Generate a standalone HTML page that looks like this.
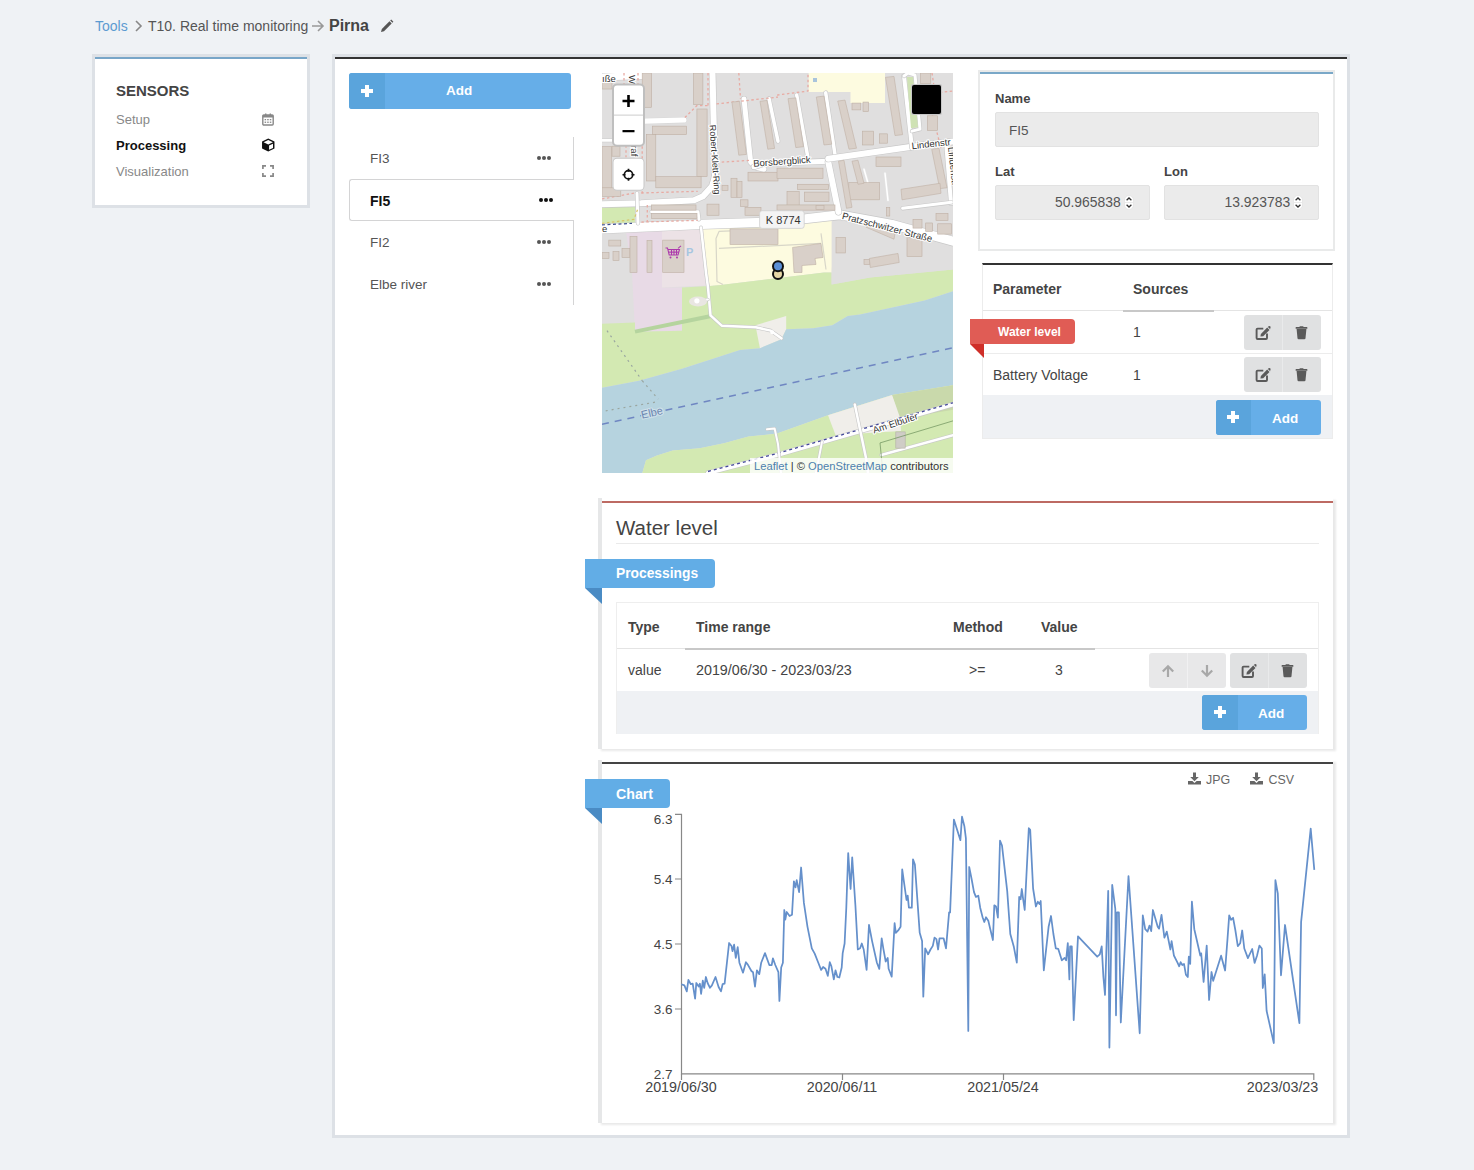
<!DOCTYPE html>
<html><head><meta charset="utf-8">
<style>
*{box-sizing:border-box;margin:0;padding:0}
html,body{width:1474px;height:1170px;overflow:hidden;background:#eff2f5;font-family:"Liberation Sans",sans-serif;color:#444}
body{position:relative}
.a{position:absolute;white-space:nowrap;line-height:1}
.box{position:absolute;background:#fff;border:3px solid #dde1e6}
.btn{position:absolute;background:#66aee8;color:#fff;font-weight:bold;border-radius:3px;overflow:hidden}
.btn .ic{position:absolute;left:0;top:0;bottom:0;background:#5aa4dc}
.plus{position:absolute;width:12px;height:12px}
.plus:before,.plus:after{content:"";position:absolute;background:#fff}
.plus:before{left:4px;top:0;width:4px;height:12px}
.plus:after{left:0;top:4px;width:12px;height:4px}
.item{position:absolute;left:349px;width:225px;height:42px;font-size:13.5px;color:#555}
.item .tx{position:absolute;left:21px;top:15px;line-height:1}
.dots{position:absolute;left:188px;top:19px;width:14px;height:4px}
.dots i{position:absolute;top:0;width:4px;height:4px;border-radius:2px;background:#555}
.gbtn{position:absolute;background:#e0e1e2}
.lbl{font-size:13px;font-weight:bold;color:#444}
.inp{position:absolute;background:#ebebeb;border:1px solid #e2e2e2;border-radius:2px}
.th{font-size:14px;font-weight:bold;color:#444}
.td{font-size:14px;color:#444}
.ribbon{position:absolute;color:#fff;font-weight:bold;border-radius:0 4px 4px 0}
</style></head>
<body>
<!-- breadcrumb -->
<div class="a" style="left:95px;top:19px;font-size:14px;color:#5c9bd1">Tools</div>
<svg class="a" style="left:133px;top:19px" width="10" height="14" viewBox="0 0 10 14"><path d="M3 2 L8 7 L3 12" fill="none" stroke="#888" stroke-width="1.6"/></svg>
<div class="a" style="left:148px;top:19px;font-size:14px;color:#555">T10. Real time monitoring</div>
<svg class="a" style="left:311px;top:19px" width="14" height="14" viewBox="0 0 14 14"><path d="M1 7 H12 M7 2 L12 7 L7 12" fill="none" stroke="#999" stroke-width="1.6"/></svg>
<div class="a" style="left:329px;top:17.5px;font-size:16px;font-weight:bold;color:#444">Pirna</div>
<svg class="a" style="left:379px;top:19px" width="15" height="15" viewBox="0 0 15 15"><path d="M2 13 L2.8 10 L10.5 2.3 L12.7 4.5 L5 12.2 Z" fill="#555"/><path d="M11.2 1.6 L12.2 0.6 L14.4 2.8 L13.4 3.8Z" fill="#555"/></svg>

<!-- sidebar -->
<div class="box" style="left:92px;top:54px;width:218px;height:154px">
  <div style="position:absolute;left:0;right:0;top:0;height:2px;background:#78a6c8"></div>
</div>
<div class="a" style="left:116px;top:82.5px;font-size:15px;font-weight:bold;color:#444">SENSORS</div>
<div class="a" style="left:116px;top:113px;font-size:13px;color:#888">Setup</div>
<div class="a" style="left:116px;top:139px;font-size:13px;font-weight:bold;color:#111">Processing</div>
<div class="a" style="left:116px;top:165px;font-size:13px;color:#888">Visualization</div>
<svg class="a" style="left:262px;top:112.7px" width="12" height="13" viewBox="0 0 12 13"><rect x="0.8" y="2" width="10.4" height="10" rx="1" fill="none" stroke="#888" stroke-width="1.4"/><rect x="0.8" y="2" width="10.4" height="2.5" fill="#888"/><rect x="3" y="0.5" width="1.4" height="2.5" fill="#888"/><rect x="7.6" y="0.5" width="1.4" height="2.5" fill="#888"/><g fill="#888"><rect x="2.6" y="6" width="1.5" height="1.3"/><rect x="5.2" y="6" width="1.5" height="1.3"/><rect x="7.8" y="6" width="1.5" height="1.3"/><rect x="2.6" y="8.6" width="1.5" height="1.3"/><rect x="5.2" y="8.6" width="1.5" height="1.3"/><rect x="7.8" y="8.6" width="1.5" height="1.3"/></g></svg>
<svg class="a" style="left:261px;top:138px" width="14.5" height="14" viewBox="0 0 14 14" preserveAspectRatio="none"><path d="M7 0.5 L13 3.5 V10.5 L7 13.5 L1 10.5 V3.5 Z" fill="#111"/><path d="M2.5 4.2 L7 6.4 L11.5 4.2 L7 2 Z" fill="#fff"/><path d="M7.8 7.6 L11.6 5.7 V9.9 L7.8 11.8Z" fill="#fff"/></svg>
<svg class="a" style="left:262px;top:165px" width="12" height="12" viewBox="0 0 12 12"><path d="M0.9 4 V0.9 H4 M8 0.9 H11.1 V4 M11.1 8 V11.1 H8 M4 11.1 H0.9 V8" fill="none" stroke="#888" stroke-width="1.7"/></svg>

<!-- main container -->
<div class="box" style="left:332px;top:54px;width:1018px;height:1084px">
  <div style="position:absolute;left:0;right:0;top:0;height:2px;background:#333"></div>
</div>

<!-- list add button -->
<div class="btn" style="left:349px;top:73px;width:222px;height:36px">
  <div class="ic" style="width:36px"><div class="plus" style="left:12px;top:12px"></div></div>
  <div class="a" style="left:97px;top:11px;font-size:13.5px">Add</div>
</div>

<!-- list -->
<div style="position:absolute;left:573px;top:137px;width:1px;height:42px;background:#d4d4d5"></div>
<div style="position:absolute;left:573px;top:221px;width:1px;height:84px;background:#d4d4d5"></div>
<div class="item" style="top:137px"><div class="tx">FI3</div><div class="dots"><i style="left:0"></i><i style="left:5px"></i><i style="left:10px"></i></div></div>
<div class="item" style="top:179px;border:1px solid #d4d4d5;border-right:none;border-radius:3px 0 0 3px;background:#fff"><div class="tx" style="left:20px;top:14px;font-weight:bold;color:#111;font-size:14px">FI5</div><div class="dots" style="left:189px;top:18px"><i style="left:0;background:#111"></i><i style="left:5px;background:#111"></i><i style="left:10px;background:#111"></i></div></div>
<div class="item" style="top:221px"><div class="tx">FI2</div><div class="dots"><i style="left:0"></i><i style="left:5px"></i><i style="left:10px"></i></div></div>
<div class="item" style="top:263px"><div class="tx">Elbe river</div><div class="dots"><i style="left:0"></i><i style="left:5px"></i><i style="left:10px"></i></div></div>

<!-- MAP -->
<div id="map" style="position:absolute;left:602px;top:73px;width:351px;height:400px;background:#e0dfdf;overflow:hidden"><svg width="351" height="400" viewBox="0 0 351 399" preserveAspectRatio="none" style="position:absolute;left:0;top:0"><rect x="0" y="0" width="351" height="399" fill="#e0dfdf"/><polygon points="100,152 233,146 229.6,199 222,199 118.5,211.5 108,212.5 104,199" fill="#fdfbe0"/><polygon points="206.6,0 283,0 283,30 248.5,30 248.5,19 206.6,19" fill="#fdfbe0"/><rect x="211" y="5" width="4" height="4" fill="#a9c4dc"/><polygon points="24,158 60,157 60,214 80,214 80,257 33,258 30,199" fill="#e8dae6"/><polygon points="60,157 101,154 104,199 106,212 60,214" fill="#ece2e6"/><polygon points="0,250 33,249 33,258 80,257 80,214 108,212.5 118.5,211.5 222,199 229.6,199 229.6,211 268,204 351,196 351,217.8 322.6,227 258,241 245.7,242.4 230.3,251.6 211,254.7 184.2,255.5 179.5,265.5 158,274.5 138,276.2 80,295 37,307 0,314" fill="#d3e9b2"/><rect x="0" y="132" width="33" height="18" fill="#d3e9b2"/><polygon points="153.4,251.6 184.2,242.4 184.2,255.5 179.5,265.5 158,274.7" fill="#f0eeea"/><polyline points="33,258 108,242.6" fill="none" stroke="#b5d49e" stroke-width="4" stroke-linecap="butt" stroke-linejoin="round"/><polygon points="229.6,146 351,175 351,196 268,204 229.6,211" fill="#e0dfdf"/><polygon points="0,314 37,307 80,295 138,276.2 158,274.5 179.5,265.5 184.2,255.5 211,254.7 230.3,251.6 245.7,242.4 258,241 322.6,227 351,217.8 351,311.5 290.2,321.2 226,341.3 175,359.7 146.5,362.6 122,369.3 97.7,374.2 70.8,376.6 55,381.5 44,386.4 40.3,399 0,399" fill="#b6d3df"/><polygon points="40.3,399 44,386.4 55,381.5 70.8,376.6 97.7,374.2 122,369.3 146.5,362.6 175,359.7 226,341.3 290.2,321.2 351,311.5 351,399" fill="#d3e9b2"/><polygon points="226,341.3 290.2,321.2 298.4,341.3 299,357 233.5,361" fill="#f0eeea"/><polygon points="290.2,321.2 351,311.5 351,336 298.4,345" fill="#c9d9ab"/><polyline points="0,350.3 351,274" fill="none" stroke="#6f86c2" stroke-width="1.5" stroke-linecap="butt" stroke-linejoin="round" stroke-dasharray="7 6"/><polyline points="40.3,307 56.2,325.3" fill="none" stroke="#9aa6a0" stroke-width="1.2" stroke-linecap="butt" stroke-linejoin="round" stroke-dasharray="2 4"/><polyline points="3.7,337 56.2,327.8" fill="none" stroke="#9aa6a0" stroke-width="1.2" stroke-linecap="butt" stroke-linejoin="round" stroke-dasharray="2 4"/><polyline points="5,257 40.3,307" fill="none" stroke="#9aa6a0" stroke-width="1.2" stroke-linecap="butt" stroke-linejoin="round" stroke-dasharray="2 4"/><polyline points="106,399 175,381 351,330.6" fill="none" stroke="#c8c8c8" stroke-width="5.2" stroke-linecap="round" stroke-linejoin="round"/><polyline points="106,399 175,381 351,330.6" fill="none" stroke="#ffffff" stroke-width="4" stroke-linecap="round" stroke-linejoin="round"/><polyline points="106,397.5 175,379.5 351,329" fill="none" stroke="#454a9a" stroke-width="1.3" stroke-linecap="butt" stroke-linejoin="round" stroke-dasharray="3 3"/><polyline points="252.8,330.6 263.9,383.6 266,399" fill="none" stroke="#c8c8c8" stroke-width="3.7" stroke-linecap="round" stroke-linejoin="round"/><polyline points="252.8,330.6 263.9,383.6 266,399" fill="none" stroke="#ffffff" stroke-width="2.5" stroke-linecap="round" stroke-linejoin="round"/><polyline points="279.3,381 351,361.4" fill="none" stroke="#c8c8c8" stroke-width="3.7" stroke-linecap="round" stroke-linejoin="round"/><polyline points="279.3,381 351,361.4" fill="none" stroke="#ffffff" stroke-width="2.5" stroke-linecap="round" stroke-linejoin="round"/><polyline points="220,368 214,399" fill="none" stroke="#c8c8c8" stroke-width="3.2" stroke-linecap="round" stroke-linejoin="round"/><polyline points="220,368 214,399" fill="none" stroke="#ffffff" stroke-width="2" stroke-linecap="round" stroke-linejoin="round"/><rect x="293.8" y="358" width="9.399999999999977" height="16.19999999999999" fill="#cfcdc6" stroke="#b3b0a6" stroke-width="0.6"/><polyline points="278,369 351,347" fill="none" stroke="#6c8f5a" stroke-width="0.7" stroke-linecap="butt" stroke-linejoin="round"/><polyline points="278,369 281,399" fill="none" stroke="#6c8f5a" stroke-width="0.7" stroke-linecap="butt" stroke-linejoin="round"/><polyline points="165,355.4 172.6,354.6 176,370 179,399" fill="none" stroke="#c8c8c8" stroke-width="3.2" stroke-linecap="round" stroke-linejoin="round"/><polyline points="165,355.4 172.6,354.6 176,370 179,399" fill="none" stroke="#ffffff" stroke-width="2" stroke-linecap="round" stroke-linejoin="round"/><polyline points="0,4 42,2.5" fill="none" stroke="#c8c8c8" stroke-width="8.2" stroke-linecap="round" stroke-linejoin="round"/><polyline points="0,4 42,2.5" fill="none" stroke="#ffffff" stroke-width="7" stroke-linecap="round" stroke-linejoin="round"/><polyline points="0,155.5 100,151 176,148.5 238,141.5 290,151 351,167.8" fill="none" stroke="#c8c8c8" stroke-width="10.2" stroke-linecap="round" stroke-linejoin="round"/><polyline points="0,155.5 100,151 176,148.5 238,141.5 290,151 351,167.8" fill="none" stroke="#ffffff" stroke-width="9" stroke-linecap="round" stroke-linejoin="round"/><polyline points="110.5,0 113,103 110,113 101,123 92,127 39,130 0,131" fill="none" stroke="#c8c8c8" stroke-width="7.2" stroke-linecap="round" stroke-linejoin="round"/><polyline points="110.5,0 113,103 110,113 101,123 92,127 39,130 0,131" fill="none" stroke="#ffffff" stroke-width="6" stroke-linecap="round" stroke-linejoin="round"/><polyline points="35,120 36,150" fill="none" stroke="#c8c8c8" stroke-width="4.2" stroke-linecap="round" stroke-linejoin="round"/><polyline points="35,120 36,150" fill="none" stroke="#ffffff" stroke-width="3" stroke-linecap="round" stroke-linejoin="round"/><polyline points="99,154 104,199 106,214 108.5,241.7 119.7,252 153.8,253.7 168.8,257 179.5,264.7" fill="none" stroke="#c8c8c8" stroke-width="3.7" stroke-linecap="round" stroke-linejoin="round"/><polyline points="99,154 104,199 106,214 108.5,241.7 119.7,252 153.8,253.7 168.8,257 179.5,264.7" fill="none" stroke="#ffffff" stroke-width="2.5" stroke-linecap="round" stroke-linejoin="round"/><circle cx="170.3" cy="258.5" r="2" fill="#fff"/><polyline points="94.9,227 106,226" fill="none" stroke="#c8c8c8" stroke-width="3.2" stroke-linecap="round" stroke-linejoin="round"/><polyline points="94.9,227 106,226" fill="none" stroke="#ffffff" stroke-width="2" stroke-linecap="round" stroke-linejoin="round"/><ellipse cx="96" cy="228" rx="9" ry="5" fill="#e9e6e2"/><circle cx="94.9" cy="227.2" r="2.6" fill="#fff"/><polyline points="142,26 148.7,89 154,94 162,96" fill="none" stroke="#c8c8c8" stroke-width="6.2" stroke-linecap="round" stroke-linejoin="round"/><polyline points="142,26 148.7,89 154,94 162,96" fill="none" stroke="#ffffff" stroke-width="5" stroke-linecap="round" stroke-linejoin="round"/><polyline points="167,25.6 176,68" fill="none" stroke="#c8c8c8" stroke-width="4.7" stroke-linecap="round" stroke-linejoin="round"/><polyline points="167,25.6 176,68" fill="none" stroke="#ffffff" stroke-width="3.5" stroke-linecap="round" stroke-linejoin="round"/><polyline points="194.7,22 205.8,83.8" fill="none" stroke="#c8c8c8" stroke-width="4.7" stroke-linecap="round" stroke-linejoin="round"/><polyline points="194.7,22 205.8,83.8" fill="none" stroke="#ffffff" stroke-width="3.5" stroke-linecap="round" stroke-linejoin="round"/><polyline points="223.7,19.7 233.1,82" fill="none" stroke="#c8c8c8" stroke-width="4.7" stroke-linecap="round" stroke-linejoin="round"/><polyline points="223.7,19.7 233.1,82" fill="none" stroke="#ffffff" stroke-width="3.5" stroke-linecap="round" stroke-linejoin="round"/><polyline points="152,93.5 162,90.5 226,88" fill="none" stroke="#c8c8c8" stroke-width="6.2" stroke-linecap="round" stroke-linejoin="round"/><polyline points="152,93.5 162,90.5 226,88" fill="none" stroke="#ffffff" stroke-width="5" stroke-linecap="round" stroke-linejoin="round"/><polyline points="226.3,88.9 236.5,138.5" fill="none" stroke="#c8c8c8" stroke-width="7.2" stroke-linecap="round" stroke-linejoin="round"/><polyline points="226.3,88.9 236.5,138.5" fill="none" stroke="#ffffff" stroke-width="6" stroke-linecap="round" stroke-linejoin="round"/><polyline points="226.3,85.5 310,73.5 351,68.4" fill="none" stroke="#c8c8c8" stroke-width="7.2" stroke-linecap="round" stroke-linejoin="round"/><polyline points="226.3,85.5 310,73.5 351,68.4" fill="none" stroke="#ffffff" stroke-width="6" stroke-linecap="round" stroke-linejoin="round"/><polyline points="302,3 310,75" fill="none" stroke="#c8c8c8" stroke-width="5.2" stroke-linecap="round" stroke-linejoin="round"/><polyline points="302,3 310,75" fill="none" stroke="#ffffff" stroke-width="4" stroke-linecap="round" stroke-linejoin="round"/><polyline points="302,3 306,0 313,2 318,56 310,58" fill="none" stroke="#c8c8c8" stroke-width="4.2" stroke-linecap="round" stroke-linejoin="round"/><polyline points="302,3 306,0 313,2 318,56 310,58" fill="none" stroke="#ffffff" stroke-width="3" stroke-linecap="round" stroke-linejoin="round"/><polygon points="305,4 311,4 316,54 309,55" fill="#cfe2b4"/><polyline points="344,68 349,130" fill="none" stroke="#c8c8c8" stroke-width="5.2" stroke-linecap="round" stroke-linejoin="round"/><polyline points="344,68 349,130" fill="none" stroke="#ffffff" stroke-width="4" stroke-linecap="round" stroke-linejoin="round"/><polyline points="300.6,135 349.4,129" fill="none" stroke="#c8c8c8" stroke-width="4.2" stroke-linecap="round" stroke-linejoin="round"/><polyline points="300.6,135 349.4,129" fill="none" stroke="#ffffff" stroke-width="3" stroke-linecap="round" stroke-linejoin="round"/><polyline points="42.7,48 82,47" fill="none" stroke="#d8d8d8" stroke-width="6.2" stroke-linecap="round" stroke-linejoin="round"/><polyline points="42.7,48 82,47" fill="none" stroke="#ffffff" stroke-width="5" stroke-linecap="round" stroke-linejoin="round"/><polyline points="0,67 12,67" fill="none" stroke="#c8c8c8" stroke-width="4.2" stroke-linecap="round" stroke-linejoin="round"/><polyline points="0,67 12,67" fill="none" stroke="#ffffff" stroke-width="3" stroke-linecap="round" stroke-linejoin="round"/><polyline points="49.6,138.5 96,138.5 97,146" fill="none" stroke="#c8c8c8" stroke-width="4.2" stroke-linecap="round" stroke-linejoin="round"/><polyline points="49.6,138.5 96,138.5 97,146" fill="none" stroke="#ffffff" stroke-width="3" stroke-linecap="round" stroke-linejoin="round"/><polyline points="262,96 270,124" fill="none" stroke="#e5e5e5" stroke-width="2.7" stroke-linecap="round" stroke-linejoin="round"/><polyline points="262,96 270,124" fill="none" stroke="#ffffff" stroke-width="1.5" stroke-linecap="round" stroke-linejoin="round"/><polyline points="283,100 286,127" fill="none" stroke="#e5e5e5" stroke-width="2.7" stroke-linecap="round" stroke-linejoin="round"/><polyline points="283,100 286,127" fill="none" stroke="#ffffff" stroke-width="1.5" stroke-linecap="round" stroke-linejoin="round"/><polyline points="141,157 117,158 114,165 115,208 121,211" fill="none" stroke="#d8d6c8" stroke-width="1.2" stroke-linecap="butt" stroke-linejoin="round"/><polyline points="117,175 219,170" fill="none" stroke="#d8d6c8" stroke-width="1.2" stroke-linecap="butt" stroke-linejoin="round"/><polyline points="219,160 224,196" fill="none" stroke="#d8d6c8" stroke-width="1.2" stroke-linecap="butt" stroke-linejoin="round"/><polyline points="106,0 106,32.5" fill="none" stroke="#e8aaa2" stroke-width="1.3" stroke-linecap="butt" stroke-linejoin="round" stroke-dasharray="2.5 2.5"/><polyline points="82.9,44.4 94.9,32.5 106,32.5" fill="none" stroke="#e8aaa2" stroke-width="1.3" stroke-linecap="butt" stroke-linejoin="round" stroke-dasharray="2.5 2.5"/><polyline points="114.5,30.8 176,24" fill="none" stroke="#e8aaa2" stroke-width="1.3" stroke-linecap="butt" stroke-linejoin="round" stroke-dasharray="2.5 2.5"/><polyline points="136.8,0 138.5,25.6" fill="none" stroke="#e8aaa2" stroke-width="1.3" stroke-linecap="butt" stroke-linejoin="round" stroke-dasharray="2.5 2.5"/><polyline points="119.7,88.9 147,87.2" fill="none" stroke="#e8aaa2" stroke-width="1.3" stroke-linecap="butt" stroke-linejoin="round" stroke-dasharray="2.5 2.5"/><polyline points="39.3,119.7 95.7,118" fill="none" stroke="#e8aaa2" stroke-width="1.3" stroke-linecap="butt" stroke-linejoin="round" stroke-dasharray="2.5 2.5"/><polyline points="22,0 22,12" fill="none" stroke="#e8aaa2" stroke-width="1.3" stroke-linecap="butt" stroke-linejoin="round" stroke-dasharray="2.5 2.5"/><polyline points="36,0 36,12" fill="none" stroke="#e8aaa2" stroke-width="1.3" stroke-linecap="butt" stroke-linejoin="round" stroke-dasharray="2.5 2.5"/><polyline points="40.2,68 40.2,120" fill="none" stroke="#e8aaa2" stroke-width="1.3" stroke-linecap="butt" stroke-linejoin="round" stroke-dasharray="2.5 2.5"/><polyline points="24,72 24,84" fill="none" stroke="#e8aaa2" stroke-width="1.3" stroke-linecap="butt" stroke-linejoin="round" stroke-dasharray="2.5 2.5"/><polyline points="0,125.6 32.5,119.7" fill="none" stroke="#e8aaa2" stroke-width="1.3" stroke-linecap="butt" stroke-linejoin="round" stroke-dasharray="2.5 2.5"/><polyline points="45.3,131.6 45.3,148.7" fill="none" stroke="#e8aaa2" stroke-width="1.3" stroke-linecap="butt" stroke-linejoin="round" stroke-dasharray="2.5 2.5"/><polyline points="39.3,148.7 95.7,147" fill="none" stroke="#e8aaa2" stroke-width="1.3" stroke-linecap="butt" stroke-linejoin="round" stroke-dasharray="2.5 2.5"/><polyline points="175,22 206,18 206,0" fill="none" stroke="#e8aaa2" stroke-width="1.3" stroke-linecap="butt" stroke-linejoin="round" stroke-dasharray="2.5 2.5"/><polyline points="330,0 333,20 351,18" fill="none" stroke="#e8aaa2" stroke-width="1.3" stroke-linecap="butt" stroke-linejoin="round" stroke-dasharray="2.5 2.5"/><polyline points="330,40 339,75" fill="none" stroke="#e8aaa2" stroke-width="1.3" stroke-linecap="butt" stroke-linejoin="round" stroke-dasharray="2.5 2.5"/><polyline points="0,150 32,146 36,135" fill="none" stroke="#d9c36a" stroke-width="1.2" stroke-linecap="butt" stroke-linejoin="round" stroke-dasharray="2.5 2.5"/><polyline points="0,151.5 30,150" fill="none" stroke="#3d4f8f" stroke-width="1.2" stroke-linecap="butt" stroke-linejoin="round" stroke-dasharray="3 2.5"/><rect x="40.2" y="0" width="9.399999999999999" height="34.2" fill="#d9d0c9" stroke="#bfb0a4" stroke-width="0.6"/><rect x="91.5" y="0" width="9.400000000000006" height="31.6" fill="#d9d0c9" stroke="#bfb0a4" stroke-width="0.6"/><rect x="94.9" y="35.9" width="10.199999999999989" height="67.5" fill="#d9d0c9" stroke="#bfb0a4" stroke-width="0.6"/><rect x="50.4" y="53" width="34.199999999999996" height="8.5" fill="#d9d0c9" stroke="#bfb0a4" stroke-width="0.6"/><rect x="44.4" y="61.5" width="9.399999999999999" height="46.2" fill="#d9d0c9" stroke="#bfb0a4" stroke-width="0.6"/><rect x="53.8" y="103.4" width="45.3" height="11.099999999999994" fill="#d9d0c9" stroke="#bfb0a4" stroke-width="0.6"/><rect x="105" y="130.8" width="12" height="11.099999999999994" fill="#d9d0c9" stroke="#bfb0a4" stroke-width="0.6"/><rect x="49.6" y="131.6" width="44.4" height="5.200000000000017" fill="#d9d0c9" stroke="#bfb0a4" stroke-width="0.6"/><rect x="49.6" y="140.3" width="45.4" height="5.0" fill="#d9d0c9" stroke="#bfb0a4" stroke-width="0.6"/><rect x="0" y="8.5" width="10" height="7.5" fill="#d9d0c9" stroke="#bfb0a4" stroke-width="0.6"/><rect x="0" y="73.5" width="9.4" height="46.2" fill="#d9d0c9" stroke="#bfb0a4" stroke-width="0.6"/><rect x="0" y="114.5" width="18.8" height="8.5" fill="#d9d0c9" stroke="#bfb0a4" stroke-width="0.6"/><rect x="10" y="73" width="8" height="10" fill="#d9d0c9" stroke="#bfb0a4" stroke-width="0.6"/><rect x="129" y="105" width="6" height="19" fill="#d9d0c9" stroke="#bfb0a4" stroke-width="0.6"/><rect x="135" y="108" width="5" height="16" fill="#d9d0c9" stroke="#bfb0a4" stroke-width="0.6"/><rect x="138.5" y="126.5" width="7.5" height="6.5" fill="#d9d0c9" stroke="#bfb0a4" stroke-width="0.6"/><rect x="143" y="134" width="16" height="7.900000000000006" fill="#d9d0c9" stroke="#bfb0a4" stroke-width="0.6"/><rect x="120" y="112" width="6" height="5" fill="#d9d0c9" stroke="#bfb0a4" stroke-width="0.6"/><rect x="146" y="99" width="30" height="8.700000000000003" fill="#d9d0c9" stroke="#bfb0a4" stroke-width="0.6"/><rect x="128" y="155.5" width="48" height="15.5" fill="#d9d0c9" stroke="#bfb0a4" stroke-width="0.6"/><rect x="6.8" y="166.7" width="12.0" height="5.900000000000006" fill="#d9d0c9" stroke="#bfb0a4" stroke-width="0.6"/><rect x="0" y="179" width="7" height="6" fill="#d9d0c9" stroke="#bfb0a4" stroke-width="0.6"/><rect x="11" y="178" width="6" height="9" fill="#d9d0c9" stroke="#bfb0a4" stroke-width="0.6"/><rect x="20" y="175" width="8" height="9" fill="#d9d0c9" stroke="#bfb0a4" stroke-width="0.6"/><rect x="28" y="163" width="7" height="36" fill="#d9d0c9" stroke="#bfb0a4" stroke-width="0.6"/><rect x="45" y="167" width="5" height="32" fill="#d9d0c9" stroke="#bfb0a4" stroke-width="0.6"/><rect x="60.7" y="166.7" width="21.299999999999997" height="32.30000000000001" fill="#d9d0c9" stroke="#bfb0a4" stroke-width="0.6"/><rect x="250" y="30" width="8.800000000000011" height="6.799999999999997" fill="#d9d0c9" stroke="#bfb0a4" stroke-width="0.6"/><rect x="261" y="29" width="5.5" height="9.5" fill="#d9d0c9" stroke="#bfb0a4" stroke-width="0.6"/><rect x="260.5" y="58" width="11.100000000000023" height="13.799999999999997" fill="#d9d0c9" stroke="#bfb0a4" stroke-width="0.6"/><rect x="277.5" y="60.7" width="7.800000000000011" height="9.299999999999997" fill="#d9d0c9" stroke="#bfb0a4" stroke-width="0.6"/><rect x="325.4" y="42.7" width="10.300000000000011" height="14.599999999999994" fill="#d9d0c9" stroke="#bfb0a4" stroke-width="0.6"/><rect x="318.6" y="0" width="10.199999999999989" height="10.3" fill="#d9d0c9" stroke="#bfb0a4" stroke-width="0.6"/><rect x="246.8" y="109.4" width="30.80000000000001" height="17.099999999999994" fill="#d9d0c9" stroke="#bfb0a4" stroke-width="0.6"/><rect x="274" y="83.8" width="25" height="9.400000000000006" fill="#d9d0c9" stroke="#bfb0a4" stroke-width="0.6"/><rect x="175" y="94.9" width="46" height="10.199999999999989" fill="#d9d0c9" stroke="#bfb0a4" stroke-width="0.6"/><rect x="195.5" y="111" width="30.80000000000001" height="5.200000000000003" fill="#d9d0c9" stroke="#bfb0a4" stroke-width="0.6"/><rect x="202.4" y="118.8" width="24.599999999999994" height="9.399999999999991" fill="#d9d0c9" stroke="#bfb0a4" stroke-width="0.6"/><rect x="185" y="118" width="12.199999999999989" height="15.300000000000011" fill="#d9d0c9" stroke="#bfb0a4" stroke-width="0.6"/><rect x="175" y="131.6" width="58" height="5.200000000000017" fill="#d9d0c9" stroke="#bfb0a4" stroke-width="0.6"/><rect x="234" y="164" width="9.400000000000006" height="15.5" fill="#d9d0c9" stroke="#bfb0a4" stroke-width="0.6"/><rect x="305" y="164" width="15" height="19" fill="#d9d0c9" stroke="#bfb0a4" stroke-width="0.6"/><rect x="311" y="146" width="9" height="8.699999999999989" fill="#d9d0c9" stroke="#bfb0a4" stroke-width="0.6"/><rect x="323.7" y="149.6" width="6.900000000000034" height="8.400000000000006" fill="#d9d0c9" stroke="#bfb0a4" stroke-width="0.6"/><rect x="334" y="140" width="12" height="7" fill="#d9d0c9" stroke="#bfb0a4" stroke-width="0.6"/><rect x="335.7" y="150.4" width="13.699999999999989" height="10.299999999999983" fill="#d9d0c9" stroke="#bfb0a4" stroke-width="0.6"/><rect x="284.4" y="134" width="3.400000000000034" height="8.699999999999989" fill="#d9d0c9" stroke="#bfb0a4" stroke-width="0.6"/><rect x="214" y="132" width="8" height="4" fill="#d9d0c9" stroke="#bfb0a4" stroke-width="0.6"/><rect x="262" y="186" width="6" height="5" fill="#d9d0c9" stroke="#bfb0a4" stroke-width="0.6"/><polygon points="190.6,174 219,170 221,184 213,185 214,191 200,192 200,199 192,199" fill="#d9d0c9" stroke="#bfb0a4" stroke-width="0.6"/><polygon points="129.9,29 137.6,28.2 144.4,81.2 136.8,82" fill="#d9d0c9" stroke="#bfb0a4" stroke-width="0.6"/><polygon points="158,28.2 165,27.4 172.6,75.2 165.8,76" fill="#d9d0c9" stroke="#bfb0a4" stroke-width="0.6"/><polygon points="186,25.6 193.8,24.8 201.5,73.5 193.8,74.4" fill="#d9d0c9" stroke="#bfb0a4" stroke-width="0.6"/><polygon points="214.3,24 222,23 229.7,71 222,71.8" fill="#d9d0c9" stroke="#bfb0a4" stroke-width="0.6"/><polygon points="235.7,28 243,27 254.5,75 247,76" fill="#d9d0c9" stroke="#bfb0a4" stroke-width="0.6"/><polygon points="283.5,4.3 292,3.4 300.6,61.5 293,62.4" fill="#d9d0c9" stroke="#bfb0a4" stroke-width="0.6"/><polygon points="329.7,76 337,75.2 345,114.5 337.7,115.3" fill="#d9d0c9" stroke="#bfb0a4" stroke-width="0.6"/><polygon points="299,116 338,110 339,120 300,126.5" fill="#d9d0c9" stroke="#bfb0a4" stroke-width="0.6"/><polygon points="236.5,88 242,87 250,134 244.5,135" fill="#d9d0c9" stroke="#bfb0a4" stroke-width="0.6"/><polygon points="250,88 256,87 262,110 256,111" fill="#d9d0c9" stroke="#bfb0a4" stroke-width="0.6"/><polygon points="264,153.8 267,150 293,160 292,165.8" fill="#d9d0c9" stroke="#bfb0a4" stroke-width="0.6"/><polygon points="267.3,185 296,180 297.2,189 268.3,194" fill="#d9d0c9" stroke="#bfb0a4" stroke-width="0.6"/><g fill="none" stroke="#ac39ac" stroke-width="1.1"><path d="M63.5 174.5 H65.5 L67.2 181.5 H76 L77.5 176 H66"/><path d="M67 178.7 H76.8"/><path d="M69.5 176 V181.5 M72 176 V181.5 M74.5 176 V181.5"/></g><g fill="#ac39ac"><circle cx="68.5" cy="184" r="1"/><circle cx="75" cy="184" r="1"/></g><path d="M76 175 L79 172.5" stroke="#ac39ac" stroke-width="1"/><text x="84" y="183" font-family="Liberation Sans" font-size="11" fill="#a7c6e0" font-weight="bold">P</text><text x="0" y="9" transform="rotate(0 0 9)" font-family="Liberation Sans" font-size="9.5" fill="#333" stroke="#fff" stroke-width="2.2" paint-order="stroke" stroke-linejoin="round">ıße</text><text x="27.5" y="2" transform="rotate(90 27.5 2)" font-family="Liberation Sans" font-size="9.5" fill="#333" stroke="#fff" stroke-width="2.2" paint-order="stroke" stroke-linejoin="round">W</text><text x="28.5" y="72" transform="rotate(90 28.5 72)" font-family="Liberation Sans" font-size="9.5" fill="#333" stroke="#fff" stroke-width="2.2" paint-order="stroke" stroke-linejoin="round">raf</text><text x="107.5" y="52" transform="rotate(86 107.5 52)" font-family="Liberation Sans" font-size="9" fill="#333" stroke="#fff" stroke-width="2.2" paint-order="stroke" stroke-linejoin="round">Robert-Klett-Ring</text><text x="151.5" y="93.5" transform="rotate(-4 151.5 93.5)" font-family="Liberation Sans" font-size="9.5" fill="#333" stroke="#fff" stroke-width="2.2" paint-order="stroke" stroke-linejoin="round">Borsbergblick</text><text x="310" y="76" transform="rotate(-6 310 76)" font-family="Liberation Sans" font-size="9.5" fill="#333" stroke="#fff" stroke-width="2.2" paint-order="stroke" stroke-linejoin="round">Lindenstr</text><text x="346" y="74" transform="rotate(84 346 74)" font-family="Liberation Sans" font-size="9.5" fill="#333" stroke="#fff" stroke-width="2.2" paint-order="stroke" stroke-linejoin="round">Lindenstr</text><text x="239.5" y="145.5" transform="rotate(14.5 239.5 145.5)" font-family="Liberation Sans" font-size="9.5" fill="#333" stroke="#fff" stroke-width="2.2" paint-order="stroke" stroke-linejoin="round">Pratzschwitzer Straße</text><text x="0" y="159" transform="rotate(0 0 159)" font-family="Liberation Sans" font-size="9.5" fill="#333" stroke="#fff" stroke-width="2.2" paint-order="stroke" stroke-linejoin="round">e</text><text x="40" y="345" transform="rotate(-13 40 345)" font-family="Liberation Sans" font-size="11" fill="#6b86b0" stroke="#cfe0ea" stroke-width="2.2" paint-order="stroke" stroke-linejoin="round">Elbe</text><text x="272" y="359.5" transform="rotate(-18 272 359.5)" font-family="Liberation Sans" font-size="9.5" fill="#333" stroke="#fff" stroke-width="2.2" paint-order="stroke" stroke-linejoin="round">Am Elbufer</text><rect x="157.6" y="137.4" width="44.6" height="17.6" rx="2.5" fill="#f4f4f4" stroke="#d0d0d0" stroke-width="0.8"/><text x="163.8" y="150.3" font-family="Liberation Sans" font-size="11" fill="#333">K 8774</text><circle cx="176" cy="200.6" r="5" fill="#e6d7a6" stroke="#111" stroke-width="2"/><circle cx="176" cy="192.7" r="5" fill="#5a8fd6" stroke="#111" stroke-width="2"/><rect x="309" y="11" width="31" height="31" rx="2" fill="#c8c8c8"/><rect x="310" y="12" width="29" height="29" rx="2" fill="#000"/><rect x="11" y="11.5" width="31" height="61" rx="4" fill="#fff" stroke="#bfbfbf" stroke-width="2"/><line x1="12" y1="42" x2="41" y2="42" stroke="#ccc" stroke-width="1"/><path d="M20.5 28 H32.5 M26.5 22 V34" stroke="#000" stroke-width="2.6"/><path d="M20.5 58 H32.5" stroke="#000" stroke-width="2.2"/><rect x="11" y="85" width="31" height="32" rx="4" fill="#fff" stroke="#c8c8c8" stroke-width="1"/><circle cx="26.5" cy="101.5" r="4.2" fill="none" stroke="#111" stroke-width="1.7"/><path d="M26.5 95.5 V98.5 M26.5 104.5 V107.5 M20.5 101.5 H23.5 M29.5 101.5 H32.5" stroke="#111" stroke-width="1.7"/><rect x="148" y="384" width="203" height="15" fill="#ffffff" fill-opacity="0.8"/><text x="152" y="395.7" font-family="Liberation Sans" font-size="11.2" fill="#333"><tspan fill="#4d80ad">Leaflet</tspan> | © <tspan fill="#4d80ad">OpenStreetMap</tspan> contributors</text></svg></div>

<!-- form panel -->
<div class="box" style="left:978px;top:70px;width:357px;height:181px;border:2px solid #e9eaea">
  <div style="position:absolute;left:0;right:0;top:0;height:2px;background:#7aa8c8"></div>
</div>
<div class="a lbl" style="left:995px;top:92px">Name</div>
<div class="inp" style="left:995px;top:112px;width:324px;height:35px"></div>
<div class="a" style="left:1009px;top:124px;font-size:13.5px;color:#555">FI5</div>
<div class="a lbl" style="left:995px;top:165px">Lat</div>
<div class="a lbl" style="left:1164px;top:165px">Lon</div>
<div class="inp" style="left:995px;top:185px;width:155px;height:35px"></div>
<div class="inp" style="left:1164px;top:185px;width:155px;height:35px"></div>
<div class="a" style="left:1055px;top:196px;font-size:13.9px;color:#555">50.965838</div>
<div class="a" style="left:1224.5px;top:196px;font-size:13.9px;color:#555">13.923783</div>

<svg class="a" style="left:1123.5px;top:195px" width="10" height="15" viewBox="0 0 10 15"><rect x="0.5" y="0.5" width="9" height="14" rx="4.5" fill="#fff" stroke="#ddd" stroke-width="0.6"/><line x1="1" y1="7.5" x2="9" y2="7.5" stroke="#ddd" stroke-width="0.6"/><path d="M2.6 5.2 L5 3 L7.4 5.2 M2.6 9.8 L5 12 L7.4 9.8" fill="none" stroke="#333" stroke-width="1.3"/></svg>
<svg class="a" style="left:1292.5px;top:195px" width="10" height="15" viewBox="0 0 10 15"><rect x="0.5" y="0.5" width="9" height="14" rx="4.5" fill="#fff" stroke="#ddd" stroke-width="0.6"/><line x1="1" y1="7.5" x2="9" y2="7.5" stroke="#ddd" stroke-width="0.6"/><path d="M2.6 5.2 L5 3 L7.4 5.2 M2.6 9.8 L5 12 L7.4 9.8" fill="none" stroke="#333" stroke-width="1.3"/></svg>
<!-- parameter table -->
<div style="position:absolute;left:982px;top:263px;width:351px;height:176px;background:#fff;border:1px solid #ececec;border-top:2px solid #333"></div>
<div class="a th" style="left:993px;top:282px">Parameter</div>
<div class="a th" style="left:1133px;top:282px">Sources</div>
<div style="position:absolute;left:983px;top:310px;width:349px;height:1px;background:#e4e4e4"></div>
<div style="position:absolute;left:1123px;top:310px;width:91px;height:2px;background:#c8c8c8"></div>
<div style="position:absolute;left:983px;top:353px;width:349px;height:1px;background:#ececec"></div>
<div class="a td" style="left:1133px;top:325px">1</div>
<div class="a td" style="left:993px;top:368px">Battery Voltage</div>
<div class="a td" style="left:1133px;top:368px">1</div>
<div style="position:absolute;left:983px;top:395px;width:349px;height:43px;background:#eff1f4"></div>

<div style="position:absolute;left:1244px;top:315px;width:77px;height:35px;background:#e0e1e2;border-radius:3px"></div><div style="position:absolute;left:1282.0px;top:315px;width:1px;height:35px;background:#e9eaeb"></div><div style="position:absolute;left:1255.25px;top:324.5px;width:16px;height:16px"><svg width="16" height="16" viewBox="0 0 16 16"><path d="M8.3 3.6 H2.6 Q1.6 3.6 1.6 4.6 V13 Q1.6 14 2.6 14 H11 Q12 14 12 13 V8.6" fill="none" stroke="#5a5a5a" stroke-width="1.9"/><path d="M5.4 11.6 L5.9 8.9 L12.2 2.6 L14.5 4.9 L8.2 11.2 Z" fill="#5a5a5a"/><path d="M12.9 1.9 L13.6 1.2 Q14.3 0.6 15 1.2 L15.4 1.6 Q16 2.3 15.3 3 L15.2 4.2 Z" fill="#5a5a5a"/></svg></div><div style="position:absolute;left:1293.75px;top:324.5px;width:16px;height:16px"><svg width="16" height="16" viewBox="0 0 16 16"><rect x="1.6" y="2.1" width="11.8" height="1.7" rx="0.6" fill="#5a5a5a"/><rect x="5.5" y="1.2" width="4" height="1.4" rx="0.5" fill="#5a5a5a"/><path d="M2.6 3.9 H12.4 L11.5 13.3 Q11.4 14.2 10.4 14.2 H4.6 Q3.6 14.2 3.5 13.3 Z" fill="#5a5a5a"/></svg></div>
<div style="position:absolute;left:1244px;top:357px;width:77px;height:35px;background:#e0e1e2;border-radius:3px"></div><div style="position:absolute;left:1282.0px;top:357px;width:1px;height:35px;background:#e9eaeb"></div><div style="position:absolute;left:1255.25px;top:366.5px;width:16px;height:16px"><svg width="16" height="16" viewBox="0 0 16 16"><path d="M8.3 3.6 H2.6 Q1.6 3.6 1.6 4.6 V13 Q1.6 14 2.6 14 H11 Q12 14 12 13 V8.6" fill="none" stroke="#5a5a5a" stroke-width="1.9"/><path d="M5.4 11.6 L5.9 8.9 L12.2 2.6 L14.5 4.9 L8.2 11.2 Z" fill="#5a5a5a"/><path d="M12.9 1.9 L13.6 1.2 Q14.3 0.6 15 1.2 L15.4 1.6 Q16 2.3 15.3 3 L15.2 4.2 Z" fill="#5a5a5a"/></svg></div><div style="position:absolute;left:1293.75px;top:366.5px;width:16px;height:16px"><svg width="16" height="16" viewBox="0 0 16 16"><rect x="1.6" y="2.1" width="11.8" height="1.7" rx="0.6" fill="#5a5a5a"/><rect x="5.5" y="1.2" width="4" height="1.4" rx="0.5" fill="#5a5a5a"/><path d="M2.6 3.9 H12.4 L11.5 13.3 Q11.4 14.2 10.4 14.2 H4.6 Q3.6 14.2 3.5 13.3 Z" fill="#5a5a5a"/></svg></div>
<div class="btn" style="left:1216px;top:400px;width:105px;height:35px">
  <div class="ic" style="width:35px"><div class="plus" style="left:11px;top:11px"></div></div>
  <div class="a" style="left:56px;top:11.75px;font-size:13.5px">Add</div>
</div>
<!-- water level ribbon (param) -->
<div class="ribbon" style="left:970px;top:319px;width:105px;height:25px;background:#e05c55"><div class="a" style="left:28px;top:7px;font-size:12px">Water level</div></div>
<svg class="a" style="left:970px;top:344px" width="14" height="14"><path d="M0 0 H14 V14 Z" fill="#cf2f29"/></svg>

<!-- water level panel -->
<div style="position:absolute;left:598px;top:498px;width:735px;height:251px;background:#fff;border-left:4px solid #e6e7e8;box-shadow:3px 2px 2px rgba(0,0,0,0.09)"></div>
<div style="position:absolute;left:602px;top:501px;width:731px;height:2px;background:#bd6a63"></div>
<div class="a" style="left:616px;top:518px;font-size:20.5px;color:#444">Water level</div>
<div style="position:absolute;left:616px;top:543px;width:703px;height:1px;background:#eaeaea"></div>

<div style="position:absolute;left:616px;top:602px;width:703px;height:132px;background:#fff;border:1px solid #eeeeee"></div>
<div class="a th" style="left:628px;top:620px">Type</div>
<div class="a th" style="left:696px;top:620px">Time range</div>
<div class="a th" style="left:953px;top:620px">Method</div>
<div class="a th" style="left:1041px;top:620px">Value</div>
<div style="position:absolute;left:617px;top:648px;width:701px;height:1px;background:#e4e4e4"></div>
<div style="position:absolute;left:685px;top:648px;width:410px;height:2px;background:#c8c8c8"></div>
<div class="a td" style="left:628px;top:663px">value</div>
<div class="a td" style="left:696px;top:663px;font-size:14.3px">2019/06/30 - 2023/03/23</div>
<div class="a td" style="left:969px;top:663px">&gt;=</div>
<div class="a td" style="left:1055px;top:663px">3</div>
<div style="position:absolute;left:617px;top:691px;width:701px;height:43px;background:#eff1f4"></div>

<div style="position:absolute;left:1149px;top:653px;width:77px;height:35px;background:#e8e8e9;border-radius:3px"></div><div style="position:absolute;left:1187.0px;top:653px;width:1px;height:35px;background:#f1f1f2"></div><div style="position:absolute;left:1160.25px;top:662.5px;width:16px;height:16px"><svg width="16" height="16" viewBox="0 0 16 16"><path d="M8 14 V3.5 M2.8 8.5 L8 3.2 L13.2 8.5" fill="none" stroke="#a8a8a8" stroke-width="2.2"/></svg></div><div style="position:absolute;left:1198.75px;top:662.5px;width:16px;height:16px"><svg width="16" height="16" viewBox="0 0 16 16"><path d="M8 2 V12.5 M2.8 7.5 L8 12.8 L13.2 7.5" fill="none" stroke="#a8a8a8" stroke-width="2.2"/></svg></div>
<div style="position:absolute;left:1230px;top:653px;width:77px;height:35px;background:#e0e1e2;border-radius:3px"></div><div style="position:absolute;left:1268.0px;top:653px;width:1px;height:35px;background:#e9eaeb"></div><div style="position:absolute;left:1241.25px;top:662.5px;width:16px;height:16px"><svg width="16" height="16" viewBox="0 0 16 16"><path d="M8.3 3.6 H2.6 Q1.6 3.6 1.6 4.6 V13 Q1.6 14 2.6 14 H11 Q12 14 12 13 V8.6" fill="none" stroke="#5a5a5a" stroke-width="1.9"/><path d="M5.4 11.6 L5.9 8.9 L12.2 2.6 L14.5 4.9 L8.2 11.2 Z" fill="#5a5a5a"/><path d="M12.9 1.9 L13.6 1.2 Q14.3 0.6 15 1.2 L15.4 1.6 Q16 2.3 15.3 3 L15.2 4.2 Z" fill="#5a5a5a"/></svg></div><div style="position:absolute;left:1279.75px;top:662.5px;width:16px;height:16px"><svg width="16" height="16" viewBox="0 0 16 16"><rect x="1.6" y="2.1" width="11.8" height="1.7" rx="0.6" fill="#5a5a5a"/><rect x="5.5" y="1.2" width="4" height="1.4" rx="0.5" fill="#5a5a5a"/><path d="M2.6 3.9 H12.4 L11.5 13.3 Q11.4 14.2 10.4 14.2 H4.6 Q3.6 14.2 3.5 13.3 Z" fill="#5a5a5a"/></svg></div>
<div class="btn" style="left:1202px;top:695px;width:105px;height:35px">
  <div class="ic" style="width:36px"><div class="plus" style="left:12px;top:11px"></div></div>
  <div class="a" style="left:56px;top:11.75px;font-size:13.5px">Add</div>
</div>
<div class="ribbon" style="left:585px;top:559px;width:130px;height:29px;background:#62ade6"><div class="a" style="left:31px;top:8px;font-size:13.8px">Processings</div></div>
<svg class="a" style="left:585px;top:588px" width="17" height="16"><path d="M0 0 H17 V16 Z" fill="#4a8bc4"/></svg>

<!-- chart panel -->
<div style="position:absolute;left:598px;top:760px;width:735px;height:363px;background:#fff;border-left:4px solid #e6e7e8;box-shadow:3px 2px 2px rgba(0,0,0,0.09)"></div>
<div style="position:absolute;left:602px;top:762px;width:731px;height:2px;background:#444"></div>
<div class="ribbon" style="left:585px;top:779px;width:85px;height:29px;background:#62ade6"><div class="a" style="left:31px;top:8px;font-size:14.2px">Chart</div></div>
<svg class="a" style="left:585px;top:808px" width="17" height="16"><path d="M0 0 H17 V16 Z" fill="#4a8bc4"/></svg>

<svg class="a" style="left:1188px;top:772px" width="13" height="13" viewBox="0 0 13 13"><path d="M5 0.5 H8 V5 H10.8 L6.5 9.2 L2.2 5 H5 Z" fill="#666"/><path d="M0 9 H4.4 L6.5 11 L8.6 9 H13 V12.5 H0 Z" fill="#666"/></svg><div class="a" style="left:1206px;top:774px;font-size:12.4px;color:#666">JPG</div><svg class="a" style="left:1250px;top:772px" width="13" height="13" viewBox="0 0 13 13"><path d="M5 0.5 H8 V5 H10.8 L6.5 9.2 L2.2 5 H5 Z" fill="#666"/><path d="M0 9 H4.4 L6.5 11 L8.6 9 H13 V12.5 H0 Z" fill="#666"/></svg><div class="a" style="left:1268.5px;top:774px;font-size:12.4px;color:#666">CSV</div>
<!--CHART--><svg class="a" style="left:0;top:0" width="1474" height="1170" viewBox="0 0 1474 1170">
<g fill="none" stroke="#888" stroke-width="1.2">
<path d="M675 814.3 H681.5 V1073.8 H1313.8 V1080"/>
<path d="M675 879 H681.5 M675 944 H681.5 M675 1009 H681.5"/>
<path d="M681.5 1073.8 V1080 M842.5 1073.8 V1080 M1003.5 1073.8 V1080"/>
</g>
<g font-family="Liberation Sans" font-size="13.5" fill="#444" text-anchor="end">
<text x="672.5" y="823.5">6.3</text><text x="672.5" y="884.2">5.4</text><text x="672.5" y="949.2">4.5</text><text x="672.5" y="1014.2">3.6</text><text x="672.5" y="1079.2">2.7</text>
</g>
<g font-family="Liberation Sans" font-size="14.3" fill="#444" text-anchor="middle">
<text x="681" y="1092">2019/06/30</text><text x="842" y="1092">2020/06/11</text><text x="1003" y="1092">2021/05/24</text><text x="1282.5" y="1092">2023/03/23</text>
</g>
<polyline points="681.3,984.2 684.4,985.4 686.8,991.4 688.4,979.9 690.8,984.2 692.7,983.7 695.1,998.6 696.3,983.0 698.7,986.6 699.9,983.7 701.1,993.8 702.8,980.6 704.2,987.8 705.9,977.0 707.6,983.0 710.0,987.8 711.9,985.4 715.5,977.0 718.6,987.0 721.0,991.4 722.6,984.2 724.6,983.7 729.1,943.0 731.5,946.0 732.5,951.2 734.1,944.7 735.8,957.9 737.7,947.1 739.4,962.7 743.0,972.7 745.9,962.2 747.8,964.6 751.4,971.0 753.0,972.2 755.0,986.6 756.9,970.3 759.3,974.2 761.2,962.7 765.0,953.1 769.3,965.0 771.7,965.0 772.9,958.4 775.3,965.0 778.4,972.2 779.4,1001.0 781.2,967.5 782.9,962.7 784.3,910.0 785.3,919.6 786.7,912.0 789.6,916.0 792.0,914.8 793.9,881.3 795.5,887.3 796.7,880.1 799.1,892.1 801.1,867.5 803.9,902.9 807.5,926.8 811.8,948.3 814.7,953.6 818.3,962.7 821.1,969.9 823.1,967.0 825.5,968.7 827.8,975.8 829.8,962.2 831.4,966.3 833.8,979.4 835.5,970.3 837.4,977.0 839.3,977.5 841.7,967.5 842.7,953.1 844.6,943.5 846.3,907.7 848.2,853.1 850.6,889.0 852.2,857.4 855.4,905.3 857.8,949.5 860.1,948.3 861.8,943.5 863.7,949.5 866.6,969.9 869.0,924.9 872.1,941.1 876.9,962.7 879.3,968.9 881.7,938.3 883.3,948.3 885.7,961.5 887.7,957.9 888.6,968.7 891.7,976.6 894.6,923.2 895.8,932.8 898.2,930.4 900.6,926.8 902.2,869.4 906.5,900.0 907.7,895.7 908.9,907.7 911.8,907.7 913.0,859.3 914.9,864.6 919.7,932.8 922.1,941.1 923.3,996.7 925.2,948.3 928.1,954.3 930.5,949.5 932.8,945.9 934.5,937.6 936.4,939.2 938.1,949.5 939.5,938.3 943.6,938.3 946.0,948.3 949.1,912.4 950.1,912.4 953.9,819.6 960.4,840.2 962.0,816.7 964.4,826.3 965.9,838.3 968.3,1030.9 969.2,867.0 971.6,879.0 974.0,892.1 975.9,896.9 978.3,895.7 980.2,907.7 982.6,917.2 984.3,922.0 986.0,917.2 988.3,920.8 990.3,929.2 992.9,940.0 994.3,905.3 996.0,906.5 997.9,917.7 1000.0,840.7 1002.0,845.5 1007.2,890.9 1010.3,934.0 1013.9,947.1 1016.8,962.7 1019.2,896.9 1020.6,899.3 1021.8,889.0 1023.0,898.1 1024.7,910.0 1028.8,828.2 1030.2,829.9 1033.1,888.5 1035.9,906.5 1037.8,901.7 1039.5,904.1 1040.7,901.0 1043.8,970.3 1048.6,926.8 1051.0,916.0 1053.4,934.0 1055.8,948.3 1058.2,948.8 1061.8,960.3 1064.6,957.9 1066.1,960.3 1067.8,943.1 1069.4,979.4 1070.1,946.4 1071.8,946.4 1073.7,1020.1 1078.0,936.4 1097.2,956.7 1099.8,954.3 1101.7,946.4 1103.4,977.0 1105.0,995.0 1108.2,890.9 1109.4,1047.6 1112.2,884.9 1115.3,908.9 1116.0,1015.3 1117.0,912.4 1118.9,912.4 1120.8,1022.5 1128.5,876.1 1139.7,1033.3 1142.8,915.3 1145.2,929.2 1147.6,931.6 1149.5,925.6 1151.2,931.1 1152.9,910.0 1157.7,926.8 1159.1,928.7 1161.5,914.8 1164.4,937.6 1166.8,931.6 1170.4,949.5 1171.6,941.1 1173.9,955.5 1177.5,962.7 1179.2,966.3 1180.6,962.2 1182.3,965.0 1184.0,963.9 1185.9,974.6 1187.8,977.0 1188.8,956.7 1190.2,963.9 1191.9,901.7 1194.3,929.2 1200.3,955.5 1201.2,953.3 1203.6,982.0 1206.7,945.6 1209.1,1000.0 1211.5,972.0 1213.2,980.8 1221.1,955.7 1225.1,970.5 1227.5,938.9 1229.2,915.4 1231.1,919.8 1233.1,917.8 1235.4,930.5 1237.8,946.1 1240.2,943.2 1242.2,930.5 1244.3,948.5 1247.9,958.1 1252.2,949.0 1254.6,962.9 1257.0,955.7 1259.4,945.6 1261.8,948.5 1262.8,988.0 1264.7,974.4 1266.6,1010.8 1273.8,1043.1 1275.4,880.2 1277.8,893.4 1281.0,975.3 1285.0,925.0 1299.4,1023.2 1301.1,922.2 1310.7,828.7 1314.3,869.9" fill="none" stroke="#6590cb" stroke-width="1.75" stroke-linejoin="round"/>
</svg><!--/CHART-->

</body></html>
